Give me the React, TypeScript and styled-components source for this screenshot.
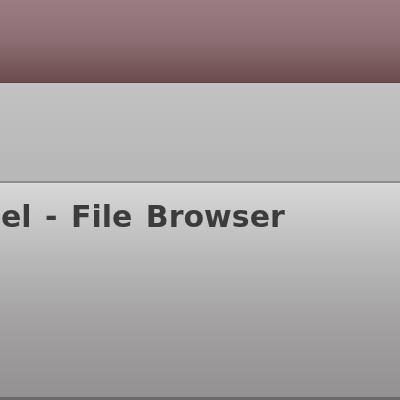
import React from "react";
import styled, { createGlobalStyle } from "styled-components";

const Global = createGlobalStyle`
  html, body { margin: 0; padding: 0; width: 400px; height: 400px; overflow: hidden; }
  #root { width: 400px; height: 400px; }
`;

const Screen = styled.div`
  width: 400px;
  height: 400px;
  display: flex;
  flex-direction: column;
  overflow: hidden;
  font-family: "DejaVu Sans", "Liberation Sans", sans-serif;
`;

const Desktop = styled.div`
  height: 82px;
  flex: none;
  background: linear-gradient(to bottom, #9a7c83 0%, #8c6e72 50%, #6c4c4c 100%);
  border-bottom: 1px solid #5c3e3e;
`;

const Toolbar = styled.div`
  height: 98px;
  flex: none;
  background: linear-gradient(to bottom, #c4c3c3 0%, #bdbcbc 50%, #b7b7b7 100%);
  border-bottom: 2px solid #8c8c8c;
`;

const TitleBar = styled.div`
  flex: 1;
  display: flex;
  align-items: flex-start;
  background: linear-gradient(to bottom, #d7d7d7 0%, #b8b8b8 35%, #a3a1a1 65%, #939191 100%);
  border-bottom: 3px solid #6a6a6a;
  border-top: 1px solid #dcdcdc;
`;

const Title = styled.span`
  margin-left: 1px;
  margin-top: 15px;
  font-size: 30px;
  font-weight: bold;
  color: #3c3c3c;
  white-space: nowrap;
  word-spacing: 3px;
  filter: blur(0.5px);
`;

export default function App() {
  return (
    <>
      <Global />
      <Screen>
        <Desktop />
        <Toolbar />
        <TitleBar>
          <Title>el - File Browser</Title>
        </TitleBar>
      </Screen>
    </>
  );
}
